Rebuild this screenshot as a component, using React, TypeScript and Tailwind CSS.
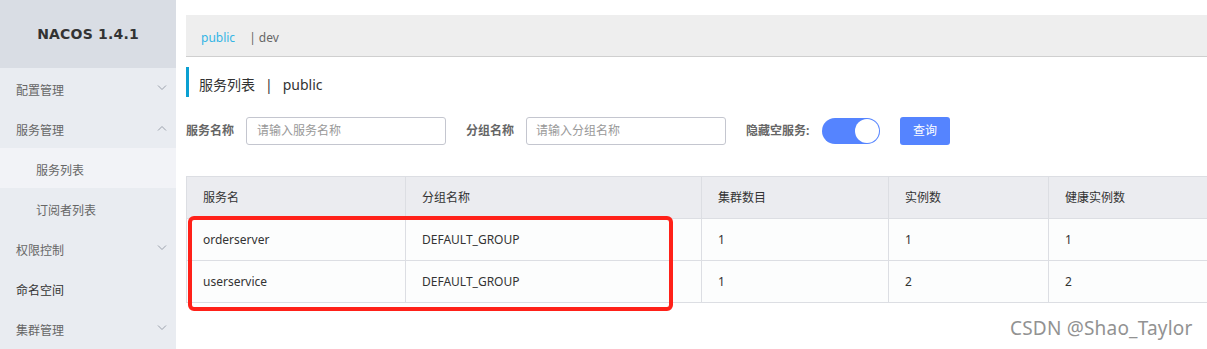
import React from "react"

const font = { fontFamily: '"Noto Sans", "Noto Sans CJK SC", sans-serif' }

function Chevron({ up }: { up?: boolean }) {
  return (
    <svg width="10" height="6" viewBox="0 0 10 6" fill="none" stroke="#9aa0ab" strokeWidth="1" className="absolute right-[9px] top-[17px]">
      {up ? <path d="M1 5.5 L5 1.5 L9 5.5" /> : <path d="M1 0.5 L5 4.5 L9 0.5" />}
    </svg>
  )
}

const menu = [
  { label: "配置管理", chevron: "down" },
  { label: "服务管理", chevron: "up" },
  { label: "服务列表", sub: true, active: true },
  { label: "订阅者列表", sub: true },
  { label: "权限控制", chevron: "down" },
  { label: "命名空间" },
  { label: "集群管理", chevron: "down" },
]

const rows = [
  { name: "orderserver", group: "DEFAULT_GROUP", clusters: 1, instances: 1, healthy: 1 },
  { name: "userservice", group: "DEFAULT_GROUP", clusters: 1, instances: 2, healthy: 2 },
]

export default function App() {
  return (
    <div className="relative flex w-[1207px] h-[349px] overflow-hidden bg-white text-[12px] text-[#333]" style={font}>
      {/* Sidebar */}
      <aside className="w-[176px] shrink-0 bg-[#e9ecf1] flex flex-col">
        <div className="h-[68px] bg-[#d9dde4] flex items-center justify-center">
          <span className="font-bold text-[14px] text-[#333] tracking-[0.2px]" style={{ fontFamily: '"DejaVu Sans", sans-serif' }}>
            NACOS 1.4.1
          </span>
        </div>
        {menu.map((m) => (
          <div
            key={m.label}
            className={`relative h-[40px] flex items-center pt-[5px] ${m.sub ? "pl-[36px]" : "pl-[16px]"} ${m.active ? "bg-[#f2f3f7]" : ""} ${m.label === "命名空间" ? "text-[#333]" : "text-[#666]"}`}
          >
            <span>{m.label}</span>
            {m.chevron && <Chevron up={m.chevron === "up"} />}
          </div>
        ))}
      </aside>

      {/* Main */}
      <main className="flex-1 pl-[10px] pt-[15px]">
        <div className="h-[42px] bg-[#eeeeee] border-b border-[#cfcfcf] flex items-center pl-[15px] pt-[4px]">
          <span className="text-[#33b5e5]">public</span>
          <span className="ml-[14px] text-[#666]">|&nbsp;dev</span>
        </div>

        <div className="mt-[10px] h-[30px] border-l-[3px] border-[#0aa0d2] pl-[10px] flex items-center pt-[5px] text-[14px] text-[#333]">
          服务列表<span className="mx-[10px] text-[#333]">|</span>public
        </div>

        {/* Search row */}
        <div className="mt-[20px] flex items-center h-[28px]">
          <span className="font-bold text-[#666] w-[60px]">服务名称</span>
          <div className="w-[200px] h-[28px] border border-[#c4c6cf] rounded-[3px] flex items-center pl-[10px] text-[#999]">请输入服务名称</div>
          <span className="ml-[20px] font-bold text-[#666] w-[60px]">分组名称</span>
          <div className="w-[200px] h-[28px] border border-[#c4c6cf] rounded-[3px] flex items-center pl-[9px] text-[#999]">请输入分组名称</div>
          <span className="ml-[20px] font-bold text-[#666] w-[76px]">隐藏空服务:</span>
          <div className="w-[58px] h-[26px] rounded-full bg-[#5584ff] flex items-center justify-end pr-[1px]">
            <div className="w-[24px] h-[24px] rounded-full bg-white" />
          </div>
          <div className="ml-[20px] w-[50px] h-[28px] rounded-[3px] bg-[#5584ff] text-white flex items-center justify-center">查询</div>
        </div>

        {/* Table */}
        <table className="mt-[31px] border-collapse table-fixed w-[1030px]">
          <colgroup>
            <col className="w-[219px]" />
            <col className="w-[296px]" />
            <col className="w-[187px]" />
            <col className="w-[160px]" />
            <col className="w-[168px]" />
          </colgroup>
          <thead>
            <tr className="bg-[#ebecf0] h-[42px]">
              {["服务名", "分组名称", "集群数目", "实例数", "健康实例数"].map((h) => (
                <th key={h} className="border border-[#dcdee3] text-left font-normal pl-[16px] text-[#333]">{h}</th>
              ))}
            </tr>
          </thead>
          <tbody>
            {rows.map((r) => (
              <tr key={r.name} className="bg-[#fcfdfd] h-[42px]">
                <td className="border border-[#dcdee3] pl-[16px]">{r.name}</td>
                <td className="border border-[#dcdee3] pl-[16px]">{r.group}</td>
                <td className="border border-[#dcdee3] pl-[16px]">{r.clusters}</td>
                <td className="border border-[#dcdee3] pl-[16px]">{r.instances}</td>
                <td className="border border-[#dcdee3] pl-[16px]">{r.healthy}</td>
              </tr>
            ))}
          </tbody>
        </table>
      </main>

      {/* Annotation box over the rows */}
      <div className="absolute left-[188px] top-[216px] w-[485px] h-[95px] border-[4px] border-[#ff2119] rounded-[6px] pointer-events-none" />

      {/* Watermark */}
      <div className="absolute left-[1010px] top-[314px] text-[19px] tracking-[0.2px] text-[#929292] pointer-events-none" style={{ textShadow: "0 0 2px #fff" }}>
        CSDN @Shao_Taylor
      </div>
    </div>
  )
}
